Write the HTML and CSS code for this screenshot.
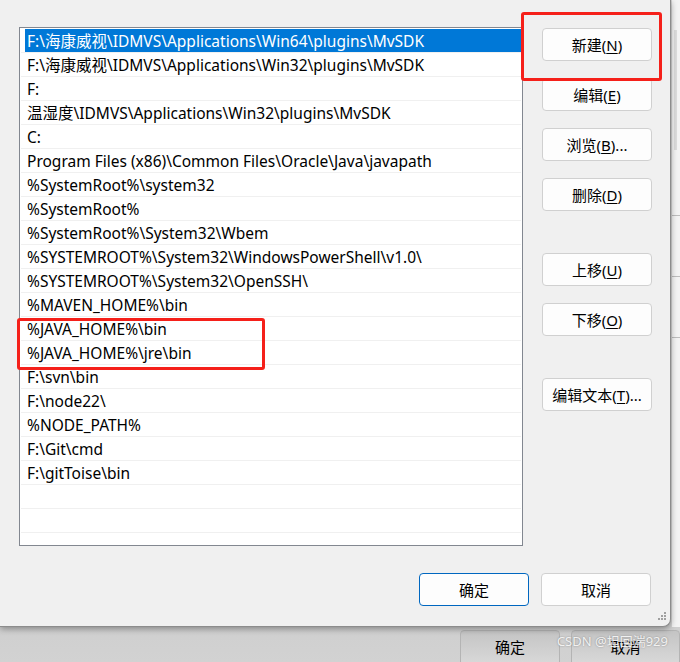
FILE: index.html
```html
<!DOCTYPE html>
<html lang="zh-CN">
<head>
    <meta charset="UTF-8">
    <title>编辑环境变量</title>
    <link rel="stylesheet" href="styles.css">
</head>
<body>
    <div class="screen">
        <div class="top">
            <!-- Edit environment variable dialog -->
            <div class="dialog">
                <div class="main">
                    <div class="list">
                        <div class="row"><span class="cell selected">F:\海康威视\IDMVS\Applications\Win64\plugins\MvSDK</span></div>
                        <div class="row"><span class="cell">F:\海康威视\IDMVS\Applications\Win32\plugins\MvSDK</span></div>
                        <div class="row"><span class="cell">F:</span></div>
                        <div class="row"><span class="cell">温湿度\IDMVS\Applications\Win32\plugins\MvSDK</span></div>
                        <div class="row"><span class="cell">C:</span></div>
                        <div class="row"><span class="cell">Program Files (x86)\Common Files\Oracle\Java\javapath</span></div>
                        <div class="row"><span class="cell">%SystemRoot%\system32</span></div>
                        <div class="row"><span class="cell">%SystemRoot%</span></div>
                        <div class="row"><span class="cell">%SystemRoot%\System32\Wbem</span></div>
                        <div class="row"><span class="cell">%SYSTEMROOT%\System32\WindowsPowerShell\v1.0\</span></div>
                        <div class="row"><span class="cell">%SYSTEMROOT%\System32\OpenSSH\</span></div>
                        <div class="row"><span class="cell">%MAVEN_HOME%\bin</span></div>
                        <div class="row"><span class="cell">%JAVA_HOME%\bin</span></div>
                        <div class="row"><span class="cell">%JAVA_HOME%\jre\bin</span></div>
                        <div class="row"><span class="cell">F:\svn\bin</span></div>
                        <div class="row"><span class="cell">F:\node22\</span></div>
                        <div class="row"><span class="cell">%NODE_PATH%</span></div>
                        <div class="row"><span class="cell">F:\Git\cmd</span></div>
                        <div class="row"><span class="cell">F:\gitToise\bin</span></div>
                        <div class="row"><span class="cell"></span></div>
                        <div class="row"><span class="cell"></span></div>
                        <div class="row"><span class="cell"></span></div>
                    </div>

                    <div class="side">
                        <button class="btn">新建(<u>N</u>)</button>
                        <button class="btn">编辑(<u>E</u>)</button>
                        <button class="btn">浏览(<u>B</u>)...</button>
                        <button class="btn">删除(<u>D</u>)</button>
                        <button class="btn sep">上移(<u>U</u>)</button>
                        <button class="btn">下移(<u>O</u>)</button>
                        <button class="btn sep">编辑文本(<u>T</u>)...</button>
                    </div>
                </div>

                <div class="footer">
                    <button class="btn primary">确定</button>
                    <button class="btn">取消</button>
                </div>

                <svg class="grip" width="12" height="12" viewBox="0 0 12 12">
                    <rect x="9" y="0" width="2" height="2" fill="#a0a0a0"/>
                    <rect x="6" y="3" width="2" height="2" fill="#a0a0a0"/>
                    <rect x="9" y="3" width="2" height="2" fill="#a0a0a0"/>
                    <rect x="3" y="6" width="2" height="2" fill="#a0a0a0"/>
                    <rect x="6" y="6" width="2" height="2" fill="#a0a0a0"/>
                    <rect x="9" y="6" width="2" height="2" fill="#a0a0a0"/>
                </svg>

                <!-- red highlight boxes -->
                <div class="mark mark-new"></div>
                <div class="mark mark-java"></div>
            </div>

            <!-- window behind the dialog -->
            <div class="behind">
                <div class="behind-bar"></div>
                <div class="behind-line l1"></div>
                <div class="behind-line l2"></div>
                <div class="behind-line l3"></div>
            </div>
        </div>

        <div class="bottom">
            <button class="back-btn">确定</button>
            <button class="back-btn wide">取消</button>
        </div>

        <div class="watermark">CSDN @坦回湍929</div>
    </div>
</body>
</html>
```

FILE: styles.css
```css
/* page */
html, body {
    margin: 0;
    height: 100%;
    overflow: hidden;
    font-family: "Noto Sans", "Noto Sans CJK SC", sans-serif;
}

.screen {
    position: relative;
    width: 680px;
    height: 662px;
    display: flex;
    flex-direction: column;
    background: linear-gradient(#9c9c9c, #d2d2d2);
}

.top {
    display: flex;
    height: 628px;
}

/* dialog */
.dialog {
    position: relative;
    width: 671px;
    height: 627px;
    box-sizing: border-box;
    background-color: #f0f0f0;
    border-right: 1px solid #8c8c8c;
    border-bottom: 1px solid #8c8c8c;
    border-bottom-right-radius: 8px;
    padding: 27px 19px 0 19px;
    box-shadow: 0 2px 6px rgba(0, 0, 0, 0.35);
    z-index: 1;
}

.main {
    display: flex;
    gap: 19px;
}

/* list box */
.list {
    width: 504px;
    height: 519px;
    flex-shrink: 0;
    box-sizing: border-box;
    border: 1px solid #828790;
    background-color: white;
    padding: 1px 1px 0 1px;
    overflow: hidden;
}

.row {
    display: flex;
    height: 24px;
    box-sizing: border-box;
    border-bottom: 1px solid #f0f0f0;
    padding-left: 4px;
}

.cell {
    flex: 1;
    height: 23px;
    box-sizing: border-box;
    line-height: 23px;
    padding: 1px 0 0 2px;
    font-size: 15.5px;
    color: black;
    white-space: nowrap;
}

.cell.selected {
    background-color: #0078d7;
    color: white;
}

/* buttons */
.side {
    display: flex;
    flex-direction: column;
    padding-top: 1px;
}

.btn {
    width: 110px;
    height: 33px;
    box-sizing: border-box;
    background-color: #fdfdfd;
    border: 1px solid #d0d0d0;
    border-radius: 4px;
    font-family: "Noto Sans", "Noto Sans CJK SC", sans-serif;
    font-size: 15px;
    color: black;
    padding: 0;
    margin-bottom: 17px;
}

.btn u {
    text-underline-offset: 2px;
}

.btn.sep {
    margin-top: 25px;
}

.footer {
    display: flex;
    justify-content: flex-end;
    gap: 12px;
    margin-top: 27px;
}

.footer .btn {
    margin-bottom: 0;
}

.btn.primary {
    border-color: #0067c0;
}

.grip {
    position: absolute;
    right: 3px;
    bottom: 2px;
}

/* red highlight boxes */
.mark {
    position: absolute;
    border: 3px solid #f5201a;
    border-radius: 3px;
    box-sizing: border-box;
}

.mark-new {
    left: 521px;
    top: 12px;
    width: 141px;
    height: 69px;
}

.mark-java {
    left: 17px;
    top: 318px;
    width: 248px;
    height: 52px;
}

/* window behind */
.behind {
    position: relative;
    flex: 1;
    background-color: #f3f3f3;
    border-left: 1px solid #d4d4d4;
}

.behind-bar {
    width: 3px;
    height: 120px;
    margin: 30px 0 0 2px;
    background-color: #dcdcdc;
}

.behind-line {
    height: 1px;
    background-color: #bdbdbd;
    margin-top: 60px;
}

.behind-line.l1 {
    margin-top: 65px;
}

.bottom {
    display: flex;
    padding: 3px 0 0 460px;
    gap: 11px;
}

.back-btn {
    width: 110px;
    height: 40px;
    box-sizing: border-box;
    background: linear-gradient(#c4c4c4, #dcdcdc);
    border: 1px solid #b4b4b4;
    border-radius: 4px;
    font-family: "Noto Sans", "Noto Sans CJK SC", sans-serif;
    font-size: 15px;
    color: black;
    padding: 0 0 8px 0;
}

.back-btn.wide {
    width: 120px;
}

.watermark {
    position: absolute;
    right: 12px;
    bottom: 12px;
    font-size: 13px;
    color: rgba(255, 255, 255, 0.85);
    text-shadow: 0 0 2px rgba(0, 0, 0, 0.35);
    white-space: nowrap;
    pointer-events: none;
    z-index: 2;
}
```
